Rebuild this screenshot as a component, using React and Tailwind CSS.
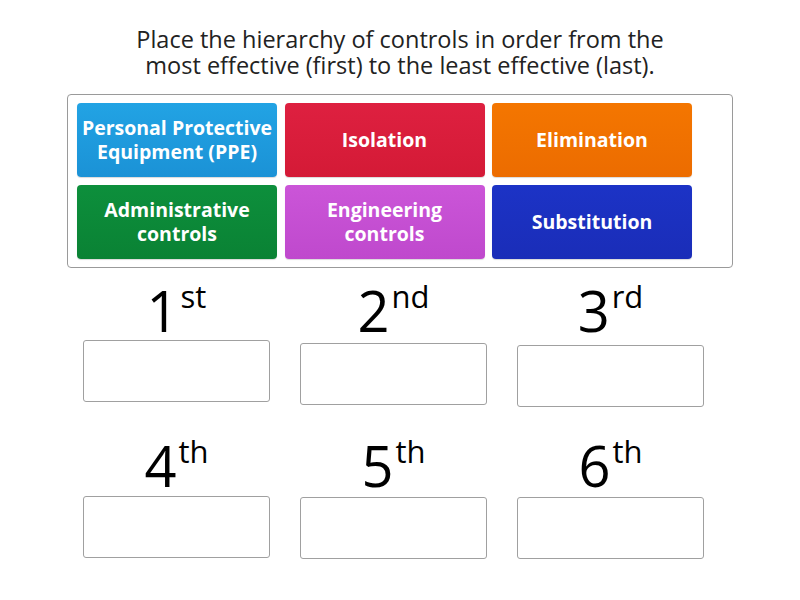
import React from "react";

const tiles = [
  { label: "Personal Protective Equipment (PPE)", cls: "from-[#22a3e4] to-[#1b92d6]" },
  { label: "Isolation", cls: "from-[#de2040] to-[#d41a36]" },
  { label: "Elimination", cls: "from-[#f47600] to-[#ec6c00]" },
  { label: "Administrative controls", cls: "from-[#0d8f3c] to-[#0a8234]" },
  { label: "Engineering controls", cls: "from-[#cb55d8] to-[#bf49cd]" },
  { label: "Substitution", cls: "from-[#1c33c6] to-[#1a2db8]" },
];

const slots = [
  { n: "1", sup: "st", box: "mt-[2px]" },
  { n: "2", sup: "nd", box: "mt-[5px]" },
  { n: "3", sup: "rd", box: "mt-[7px]" },
  { n: "4", sup: "th", box: "mt-[3px]" },
  { n: "5", sup: "th", box: "mt-[4px]" },
  { n: "6", sup: "th", box: "mt-[4px]" },
];

function Tile({ label, cls }) {
  return (
    <div
      className={`h-[74px] rounded-[4px] bg-gradient-to-b ${cls} flex items-center justify-center text-center text-white font-bold text-[19.5px] leading-[24px] shadow-[0_1px_1px_rgba(0,0,0,0.15)]`}
    >
      {label}
    </div>
  );
}

function Slot({ n, sup, box }) {
  return (
    <div className="flex flex-col items-center">
      <div className="flex items-start text-black">
        <span className="text-[56px] leading-none">{n}</span>
        <span className="text-[31px] leading-none mt-[-1px] ml-[2px]">{sup}</span>
      </div>
      <div className={`${box} w-[187px] h-[62px] border border-[#a0a0a0] rounded-[3px] bg-white`} />
    </div>
  );
}

export default function App() {
  return (
    <div
      className="w-[800px] h-[600px] bg-white flex flex-col items-center"
      style={{ fontFamily: '"Open Sans", "Noto Sans", sans-serif' }}
    >
      <div className="mt-[26px] text-center text-[23.5px] leading-[26px] text-[#222]">
        <p>Place the hierarchy of controls in order from the</p>
        <p>most effective (first) to the least effective (last).</p>
      </div>

      <div className="mt-[16px] w-[666px] h-[174px] border border-[#9a9a9a] rounded-[4px] pl-[9px] pt-[8px]">
        <div className="grid grid-cols-[200px_200px_200px] gap-x-[7.5px] gap-y-[8px]">
          {tiles.map((t) => (
            <Tile key={t.label} {...t} />
          ))}
        </div>
      </div>

      <div className="mt-[14px] self-start ml-[83px] grid grid-cols-[187px_187px_187px] gap-x-[30px] gap-y-[30px]">
        {slots.map((s) => (
          <Slot key={s.n} {...s} />
        ))}
      </div>
    </div>
  );
}
